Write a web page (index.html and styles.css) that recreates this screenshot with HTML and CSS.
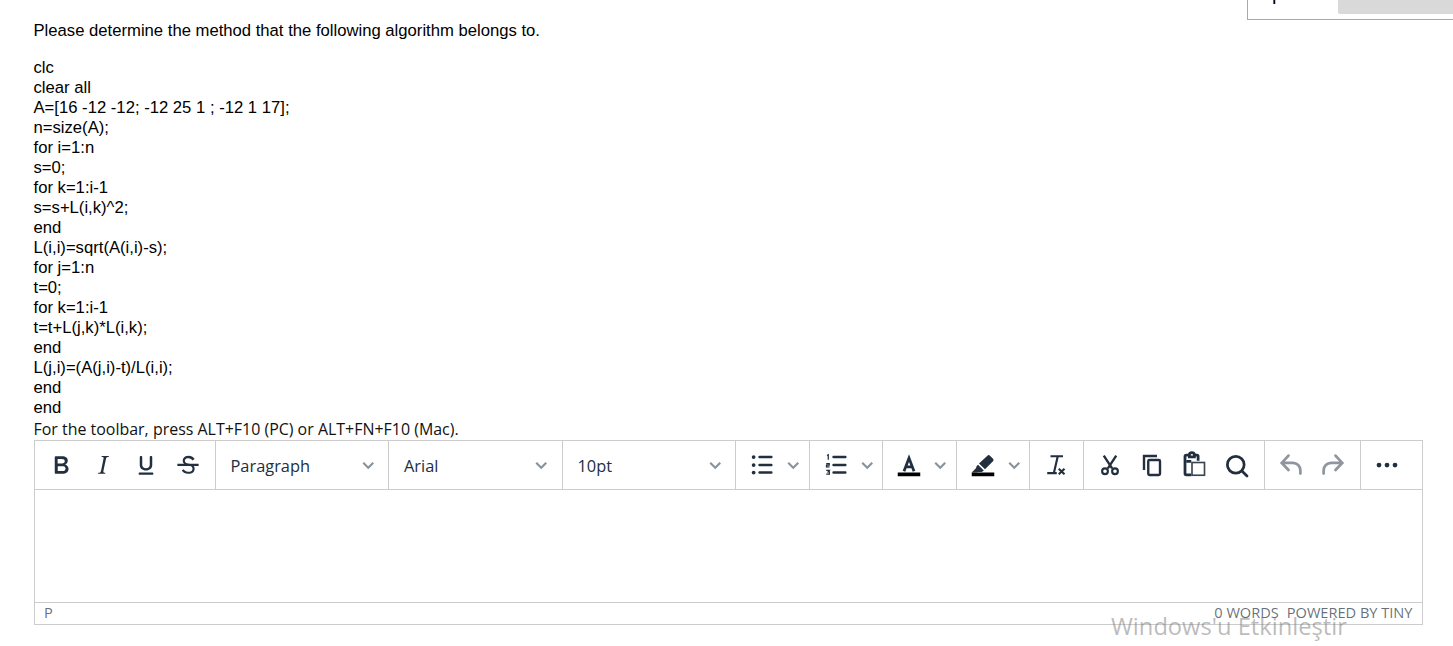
FILE: index.html
```html
<!DOCTYPE html>
<html lang="en">
<head>
<meta charset="utf-8">
<title>Question</title>
<link rel="stylesheet" href="styles.css">
</head>
<body>
<div class="top-widget"><span class="top-letter">p</span><span class="top-button"></span></div>
<main class="question">
  <p class="prompt">Please determine the method that the following algorithm belongs to.</p>
  <div class="code">
    <div>clc</div><div>clear all</div><div>A=[16 -12 -12; -12 25 1 ; -12 1 17];</div><div>n=size(A);</div><div>for i=1:n</div><div>s=0;</div><div>for k=1:i-1</div><div>s=s+L(i,k)^2;</div><div>end</div><div>L(i,i)=sqrt(A(i,i)-s);</div><div>for j=1:n</div><div>t=0;</div><div>for k=1:i-1</div><div>t=t+L(j,k)*L(i,k);</div><div>end</div><div>L(j,i)=(A(j,i)-t)/L(i,i);</div><div>end</div><div>end</div>
  </div>
  <div class="hint">For the toolbar, press ALT+F10 (PC) or ALT+FN+F10 (Mac).</div>
  <section class="editor">
    <div class="toolbar">
      <div class="group">
        <span class="btn"><svg class="icon" viewBox="0 0 24 24"><path d="M7.8 19c-.3 0-.5 0-.6-.2l-.2-.5V5.7c0-.2 0-.4.2-.5l.6-.2h5c1.5 0 2.7.3 3.5 1 .7.6 1.1 1.4 1.1 2.5a3 3 0 0 1-.6 1.9c-.4.6-1 1-1.6 1.2.4.1.9.3 1.3.6s.8.7 1 1.2c.4.4.5 1 .5 1.6 0 1.3-.4 2.3-1.3 3-.8.7-2.1 1-3.8 1H7.8zm5-8.3c.6 0 1.2-.1 1.6-.5.4-.3.6-.7.6-1.3 0-1.1-.8-1.7-2.4-1.7H9.3v3.5h3.4zm.5 6c.7 0 1.3-.1 1.7-.4.4-.4.6-.9.6-1.5s-.2-1-.7-1.4c-.4-.3-1-.4-2-.4H9.4v3.8h4z"/></svg></span>
        <span class="btn"><svg class="icon" viewBox="0 0 24 24"><path d="M16.7 4.7l-.1.9h-.3c-.6 0-1 0-1.4.3-.3.3-.4.6-.5 1.1l-2.1 9.8v.6c0 .5.4.8 1.4.8h.2l-.2.8H8l.2-.8h.2c1.1 0 1.8-.5 2-1.5l2-9.8.1-.5c0-.6-.4-.8-1.4-.8h-.3l.2-.9h5.8z"/></svg></span>
        <span class="btn"><svg class="icon" viewBox="0 0 24 24"><path d="M16 4.8c.6 0 1 .4 1 1V12c0 2.6-2 4.4-5 4.4S7 14.600 7 12V5.800c0-.6.4-1 1-1s1 .4 1 1V12c0 1.500 1.200 2.500 3 2.500s3-1 3-2.500V5.800c0-.6.4-1 1-1zM7 18h10c.6 0 .9.400.9.900s-.3.900-.9.900H7c-.6 0-.9-.4-.9-.9s.3-.9.900-.9z"/></svg></span>
        <span class="btn"><svg class="icon" viewBox="0 0 24 24"><path d="M15.600 8.500c-.5-.7-1-1.100-1.300-1.300-.6-.4-1.300-.6-2-.6-2.700 0-2.800 1.700-2.800 2.100 0 1.600 1.800 2 3.200 2.300 4.400.9 4.600 2.800 4.600 3.900 0 1.400-.7 4.100-5 4.100A6.200 6.200 0 0 1 7 16.400l1.500-1.100c.4.600 1.600 2 3.700 2 1.600 0 2.500-.4 3-1 .3-.4.4-.9.4-1.300 0-1.600-1.200-2.200-3.200-2.600-1.600-.3-4.600-1-4.600-3.900 0-1.300.7-4 4.700-4 1.100 0 2 .3 3 .8.700.4 1.300 1 1.800 1.800l-1.600 1z"/><path d="M3.500 11h17v1.800h-17z"/></svg></span>
      </div>
      <div class="group select-group"><span class="select"><span>Paragraph</span><svg class="chev" viewBox="0 0 10 10"><path d="M1 3l4 4 4-4"/></svg></span></div>
      <div class="group select-group"><span class="select"><span>Arial</span><svg class="chev" viewBox="0 0 10 10"><path d="M1 3l4 4 4-4"/></svg></span></div>
      <div class="group select-group"><span class="select"><span>10pt</span><svg class="chev" viewBox="0 0 10 10"><path d="M1 3l4 4 4-4"/></svg></span></div>
      <div class="group">
        <span class="split"><svg class="icon" viewBox="0 0 24 24"><g class="lines"><path d="M10 5.600h9.500M10 12h9.500M10 18h9.500"/></g><circle cx="5.300" cy="5.600" r="1.500"/><circle cx="5.300" cy="12" r="1.500"/><circle cx="5.300" cy="18" r="1.500"/></svg><svg class="chev" viewBox="0 0 10 10"><path d="M1 3l4 4 4-4"/></svg></span>
      </div>
      <div class="group">
        <span class="split"><svg class="icon" viewBox="0 0 24 24"><g class="lines"><path d="M10 5.600h9.500M10 12h9.500M10 18h9.500"/></g><g class="thin"><path d="M4.800 4.400l1-.6v4M4.200 10.800h2.400v1.200H4.400v1.400h2.400M4.200 16.300h2.500l-1 1.200h1v1.700H4.200"/></g></svg><svg class="chev" viewBox="0 0 10 10"><path d="M1 3l4 4 4-4"/></svg></span>
      </div>
      <div class="group">
        <span class="split"><svg class="icon" viewBox="0 0 24 24"><g class="lines butt heavy"><path d="M8 17l4-10.500L16 17M9.300 13.500h5.400"/></g><path class="swatch" d="M3 18h18v3H3z"/></svg><svg class="chev" viewBox="0 0 10 10"><path d="M1 3l4 4 4-4"/></svg></span>
      </div>
      <div class="group">
        <span class="split"><svg class="icon" viewBox="0 0 24 24"><path d="M15.500 4.500a1.500 1.500 0 0 1 2.100 0l2.400 2.400a1.500 1.500 0 0 1 0 2.100L13.600 15.400 8.800 10.800zM8 11.800l4.700 4.500-1.700 1.200H8l-1 .5H3l3.500-3.700.2-1.200z"/><path class="swatch" d="M3 18h18v3H3z"/></svg><svg class="chev" viewBox="0 0 10 10"><path d="M1 3l4 4 4-4"/></svg></span>
      </div>
      <div class="group">
        <span class="btn"><svg class="icon" viewBox="0 0 24 24"><g class="thin wide"><path d="M7.600 5h10M13.400 5l-3 13M5 18.500h7.600M14.200 15l4.600 4.400M18.800 15l-4.600 4.400"/></g></svg></span>
      </div>
      <div class="group">
        <span class="btn"><svg class="icon" viewBox="0 0 24 24"><g class="lines butt"><path d="M7 4.500l6.700 10.200M17 4.500L10.300 14.700"/></g><g class="thin wide"><circle cx="8" cy="17" r="2.300"/><circle cx="16" cy="17" r="2.300"/></g></svg></span>
        <span class="btn"><svg class="icon" viewBox="0 0 24 24"><g class="lines butt"><path d="M5.600 16V4.800H16"/><rect x="9" y="8" width="9.400" height="12" rx="1"/></g></svg></span>
        <span class="btn"><svg class="icon" viewBox="0 0 24 24"><g class="lines butt heavy"><path d="M9 19.800H5a1 1 0 0 1-1-1V5a1 1 0 0 1 1-1h2.500M11 4h2.500a1 1 0 0 1 1 1v3.500"/><path d="M7.500 5.500V3.800a2 1.800 0 0 1 4 0v1.700zM5 9h4"/></g><g class="lines paper"><rect x="9.600" y="10" width="10" height="10.200"/></g></svg></span>
        <span class="btn"><svg class="icon" viewBox="0 0 24 24"><g class="lines heavy"><circle cx="11" cy="11.800" r="6.700"/><path d="M16 16.800l4 4"/></g></svg></span>
      </div>
      <div class="group">
        <span class="btn"><svg class="icon off" viewBox="0 0 24 24"><g class="lines heavy"><path d="M10 4.500L4.600 10.300 10 16M5 10.300h8.500a6 6 0 0 1 6 6v2.500"/></g></svg></span>
        <span class="btn"><svg class="icon off" viewBox="0 0 24 24"><g class="lines heavy"><path d="M14 4.500l5.400 5.800L14 16M19 10.300h-8.500a6 6 0 0 0-6 6v2.500"/></g></svg></span>
      </div>
      <div class="group">
        <span class="btn"><svg class="icon" viewBox="0 0 24 24"><circle cx="5.600" cy="12" r="1.900"/><circle cx="12" cy="12" r="1.900"/><circle cx="18.400" cy="12" r="1.900"/></svg></span>
      </div>
    </div>
    <div class="edit-area"></div>
    <footer class="statusbar">
      <span class="path">P</span>
      <span class="status-right"><span>0 WORDS</span><span>POWERED BY TINY</span></span>
    </footer>
  </section>
</main>
<div class="watermark">Windows'u Etkinleştir</div>
</body>
</html>
```
FILE: styles.css
```css
* { box-sizing: border-box; }
html, body { margin: 0; height: 646px; overflow: hidden; background: #fff; }
body { font-family: "Liberation Sans", Arial, sans-serif; font-size: 16.670px; line-height: 20px; color: #000; position: relative; }
.question { padding: 21px 30px 0 33.500px; }
.prompt { margin: 0 0 17px; }
.code { margin: 0; }
.hint { font-family: "Open Sans", sans-serif; font-size: 15.960px; line-height: 22px; height: 22px; margin-bottom: 0; color: #111; }
.editor { width: 1389.500px; height: 185px; border: 1px solid #ccc; display: flex; flex-direction: column; font-family: "Open Sans", sans-serif; color: #222f3e; }
.toolbar { display: flex; height: 49px; border-bottom: 1px solid #ccc; flex: none; }
.group { display: flex; align-items: center; padding: 0 5px; border-right: 1px solid #ccc; }
.group:last-child { border-right: 0; }
.select-group { padding: 0; }
.btn { width: 42.500px; height: 42.500px; display: flex; align-items: center; justify-content: center; }
.icon { width: 30px; height: 30px; fill: #222f3e; display: block; flex: none; }
.icon.off { opacity: .5; }
.lines { fill: none; stroke: #222f3e; stroke-width: 1.900; stroke-linecap: round; }
.lines.butt { stroke-linecap: butt; }
.lines.heavy { stroke-width: 2.200; }
.paper { stroke: #39444f; stroke-width: 1.300; stroke-linecap: butt; }
.thin { fill: none; stroke: #222f3e; stroke-width: 1; }
.thin.wide { stroke-width: 1.700; }
.swatch { fill: #000; }
.select { width: 172.500px; display: flex; align-items: center; justify-content: space-between; padding: 0 14px 0 15px; font-size: 16.400px; line-height: 24px; }
.select > span { position: relative; top: .5px; }
.chev { width: 12.500px; height: 12.500px; fill: none; stroke: #8a939c; stroke-width: 1.700; display: block; flex: none; }
.split { width: 62.500px; display: flex; align-items: center; gap: 10px; padding-left: 6px; }
.edit-area { flex: 1; }
.statusbar { height: 22px; border-top: 1px solid #ccc; display: flex; justify-content: space-between; align-items: center; padding: 0 9.500px 3px; font-size: 14.580px; line-height: 19px; color: rgba(34,47,62,.7); flex: none; }
.status-right { display: flex; gap: 8px; }
.top-widget { position: absolute; top: 0; left: 1247px; right: 0; height: 20px; border-left: 1px solid #aaa; border-bottom: 1px solid #aaa; overflow: hidden; }
.top-letter { position: absolute; left: 24px; top: -17px; font-size: 20px; line-height: 20px; color: #000; }
.top-button { position: absolute; left: 90px; top: 0; right: 0; height: 14px; background: #d9d9d9; border-bottom-left-radius: 2px; }
.watermark { position: absolute; left: 1111px; top: 609px; font-family: "Open Sans", sans-serif; font-size: 23.700px; line-height: 34px; color: rgba(120,120,120,.5); white-space: nowrap; }
```
